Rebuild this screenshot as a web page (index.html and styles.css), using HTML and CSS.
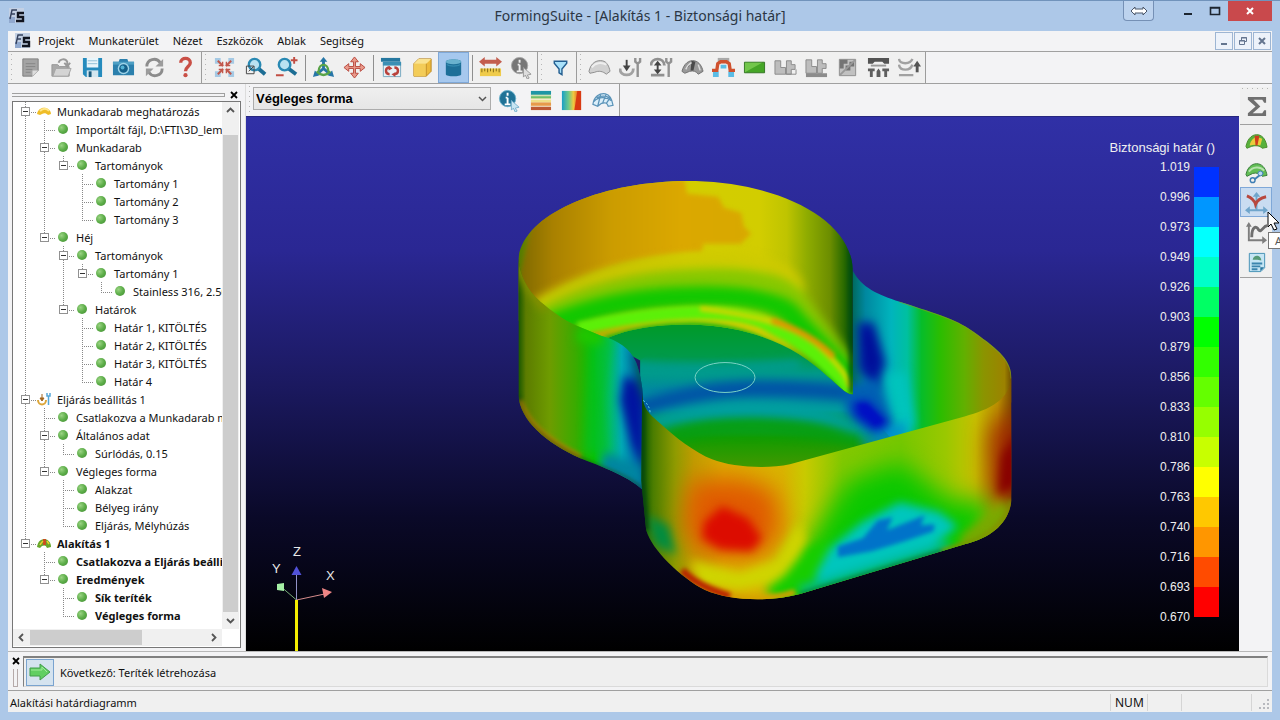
FILE: index.html
```html
<!DOCTYPE html>
<html lang="hu">

<head>
    <meta charset="utf-8">
    <title>FormingSuite - [Alakítás 1 - Biztonsági határ]</title>
    <link rel="stylesheet" href="styles.css">
</head>

<body>
    <div class="window">
        <header class="titlebar">
            <svg class="logo" viewBox="0 0 18 16"><rect x="1" width="15" height="15" fill="#c3d0e4"/><path d="M1 9h6v6H1z" fill="#91a9cf"/><path d="M2 11L4 2h5M3 6h4" fill="none" stroke="#34405c" stroke-width="1.4"/><path d="M16 5h-6v4h5v4H8" fill="none" stroke="#10141f" stroke-width="2.4"/></svg>
            <h1>FormingSuite - [Alakítás 1 - Biztonsági határ]</h1>
            <div class="caption-buttons">
                <button class="cap-switch" aria-label="Váltás"><svg width="18" height="10" viewBox="0 0 18 10"><path d="M1 5l4-4v2h8V1l4 4-4 4V7H5v2z" fill="#fff" stroke="#4b5668"/></svg></button>
                <button class="cap" aria-label="Kis méret"><svg width="12" height="12" viewBox="0 0 12 12"><path d="M2 8h8v2H2z" fill="#1c2530"/></svg></button>
                <button class="cap" aria-label="Teljes méret"><svg width="12" height="12" viewBox="0 0 12 12"><path d="M1.500 2.500h9v7h-9zM1 3h10" fill="none" stroke="#1c2530" stroke-width="1.600"/></svg></button>
                <button class="cap cap-close" aria-label="Bezárás"><svg width="12" height="12" viewBox="0 0 12 12"><path d="M3 3l6 6M9 3l-6 6" stroke="#fff" stroke-width="2"/></svg></button>
            </div>
        </header>

        <div class="client">
            <nav class="menubar">
                <svg class="logo" viewBox="0 0 18 16"><rect x="1" width="15" height="15" fill="#c3d0e4"/><path d="M1 9h6v6H1z" fill="#91a9cf"/><path d="M2 11L4 2h5M3 6h4" fill="none" stroke="#34405c" stroke-width="1.4"/><path d="M16 5h-6v4h5v4H8" fill="none" stroke="#10141f" stroke-width="2.4"/></svg>
                <a href="#">Projekt</a>
                <a href="#">Munkaterület</a>
                <a href="#">Nézet</a>
                <a href="#">Eszközök</a>
                <a href="#">Ablak</a>
                <a href="#">Segitség</a>
                <div class="mdi-buttons">
                    <button aria-label="Ablak kis méret"><svg width="10" height="10" viewBox="0 0 10 10"><path d="M2 7h6v2H2z" fill="#64758f"/></svg></button>
                    <button aria-label="Ablak visszaállítás"><svg width="10" height="10" viewBox="0 0 10 10"><path d="M3.500 4V1.500h5v4H7M1.500 4.500h5v4h-5zM3 2h6M1 5h6" fill="none" stroke="#64758f"/></svg></button>
                    <button aria-label="Ablak bezárás"><svg width="10" height="10" viewBox="0 0 10 10"><path d="M2 2l6 6M8 2L2 8" stroke="#64758f" stroke-width="2"/></svg></button>
                </div>
            </nav>

            <div class="toolbars">
                <div class="toolbar">
                    <button aria-label="Új"><svg viewBox="0 0 24 24"><path d="M4 3h16v12l-6 6H4z" fill="#a4a4a4" stroke="#7d7d7d"/><path d="M7 8h10M7 11h10M7 14h7M7 17h5" stroke="#868686"/><path d="M20 15l-6 6v-6z" fill="#ddd"/></svg></button>
                    <button aria-label="Megnyitás"><svg viewBox="0 0 24 24"><path d="M2 21V9h6l2 2h10v10z" fill="#a9a9a9" stroke="#999"/><path d="M3 21l3-8h16l-3 8z" fill="#d4d4d4" stroke="#a5a5a5"/><path d="M9 7c1-4 7-5 9-1v4M15 7l3 4 3-4" fill="none" stroke="#999" stroke-width="2"/></svg></button>
                    <button aria-label="Mentés"><svg viewBox="0 0 24 24"><path d="M2 2h20v20H5l-3-3z" fill="#258bbd"/><path d="M6 2h12v10H6z" fill="#e8f5fb"/><path d="M7 5h10M7 8h10" stroke="#8fbfd6"/><path d="M6 15h12v7H6z" fill="#d3e6ef"/><path d="M8 16h3v6H8z" fill="#19597c"/></svg></button>
                    <button aria-label="Pillanatkép"><svg viewBox="0 0 24 24"><path d="M1 6h6l1-3h8l1 3h6v14H1z" fill="#2c80ad"/><path d="M1 6h22v3H1z" fill="#4d9fc4"/><circle cx="12" cy="13" r="6" fill="#9ed3e8"/><circle cx="12" cy="13" r="4.500" fill="#14608a"/><circle cx="11" cy="12" r="2" fill="#53b2d4"/></svg></button>
                    <button aria-label="Frissítés"><svg viewBox="0 0 24 24"><path d="M4 11c0-8 10-10 14-4M20 13c0 8-10 10-14 4" fill="none" stroke="#8c8c8c" stroke-width="3"/><path d="M21 3v8h-8zM3 21v-8h8z" fill="#9c9c9c"/></svg></button>
                    <button aria-label="Súgó"><svg viewBox="0 0 24 24"><path d="M7 7c0-6 10-6 10 0 0 4-5 4-5 9" fill="none" stroke="#c94f46" stroke-width="3.500"/><circle cx="12" cy="20" r="2.200" fill="#c94f46"/></svg></button>
                </div>
                <div class="toolbar">
                    <button aria-label="Teljes nézet"><svg viewBox="0 0 24 24"><path d="M2 2h6v6H2zM16 2h6v6h-6zM2 16h6v6H2zM16 16h6v6h-6z" fill="#a5c9e4"/><path d="M5 5l14 14M19 5L5 19" stroke="#c2564a" stroke-width="2"/><path d="M10 10h4v4h-4z" fill="#f0f0f0"/><path d="M6 10h4V6M14 6v4h4M6 14h4v4M14 18v-4h4" fill="none" stroke="#c2564a" stroke-width="1.500"/></svg></button>
                    <button aria-label="Nagyítás terület"><svg viewBox="0 0 24 24"><path d="M15 13l7 6" stroke="#1c6d94" stroke-width="4"/><circle cx="11" cy="9" r="6" fill="#b9e2f1" stroke="#2989b3" stroke-width="2.500"/><path d="M2.500 10.500h8v8h-8z" fill="none" stroke="#444"/><path d="M5 16l5-5" stroke="#333"/></svg></button>
                    <button aria-label="Nagyítás"><svg viewBox="0 0 24 24"><path d="M14 13l8 6" stroke="#1c6d94" stroke-width="4"/><circle cx="10" cy="9" r="6" fill="#b9e2f1" stroke="#2989b3" stroke-width="2.500"/><path d="M20 1v7M16.500 4.500h7M1 20h8" stroke="#c14d43" stroke-width="2"/></svg></button>
                    <span class="sep"></span>
                    <button aria-label="Forgatás"><svg viewBox="0 0 24 24"><path d="M12 3v10M12 13l-8 7M12 13l8 7" stroke="#2676a7" stroke-width="3"/><path d="M12 1l4 5H8zM1 22l2-7 5 5zM23 22l-2-7-5 5z" fill="#2676a7"/><path d="M7 16c0-9 10-9 10 0M5 16c4 5 10 5 14 0" fill="none" stroke="#58a348" stroke-width="2.500"/></svg></button>
                    <button aria-label="Mozgatás"><svg viewBox="0 0 24 24"><path d="M12 1l4 5h-3v5h5V8l5 4-5 4v-3h-5v5h3l-4 5-4-5h3v-5H6v3l-5-4 5-4v3h5V6H8z" fill="#e99a8b" stroke="#b8493f"/></svg></button>
                    <span class="sep"></span>
                    <button aria-label="Ablakok"><svg viewBox="0 0 24 24"><path d="M1 2h20v4H1z" fill="#25779f"/><path d="M3.500 6.500h18v15h-18z" fill="#e8f1f6" stroke="#77a9c0"/><path d="M3 6h19v4H3z" fill="#3b8fb4"/><path d="M10 12c-5 0-5 7 0 7M15 12c5 0 5 7 0 7" fill="none" stroke="#b9413b" stroke-width="2.500"/><path d="M9 10l4 3-4 2zM16 17l-4 2 4 3z" fill="#b9413b"/></svg></button>
                    <button aria-label="Téglatest"><svg viewBox="0 0 24 24"><path d="M3 8l5-5h13v13l-5 5H3z" fill="#edba3c" stroke="#b98722"/><path d="M3 8h13v13H3z" fill="#f3cc58"/><path d="M3 8l5-5h13l-5 5z" fill="#fae391"/><path d="M16 8v13" stroke="#c6932c"/></svg></button>
                    <button class="pressed" aria-label="Árnyalt"><svg viewBox="0 0 24 24"><path d="M4 6c0-3 16-3 16 0v13c0 3-16 3-16 0z" fill="#1d6f98"/><ellipse cx="12" cy="6" rx="8" ry="2.500" fill="#69b2cf"/><path d="M5 9c3 2 11 2 14 0" fill="none" stroke="#3c94b9"/></svg></button>
                    <span class="sep"></span>
                    <button aria-label="Mérés"><svg viewBox="0 0 24 24"><path d="M0 6l6-5v3h12V1l6 5-6 5V8H6v3z" fill="#c35d4e"/><path d="M1 13h22v8H1z" fill="#efcb4b"/><path d="M3 13v4M6 13v3M9 13v4M12 13v3M15 13v4M18 13v3M21 13v4" stroke="#806716"/></svg></button>
                    <button aria-label="Információ"><svg viewBox="0 0 24 24"><circle cx="10" cy="10" r="8.500" fill="#767676" stroke="#a7a7a7"/><path d="M10 4v3M10 9v7M8 9h2M7 16h6" stroke="#eee" stroke-width="2"/><path d="M14 12l8 7-4 1 2 3-2 1-2-4-2 2z" fill="#ddd" stroke="#999"/></svg></button>
                </div>
                <div class="toolbar">
                    <button aria-label="Szűrő"><svg viewBox="0 0 24 24"><path d="M5.500 5.500h13v2l-5 6v6l-3-2v-4l-5-6z" fill="#a9e1fa" stroke="#245f91" stroke-width="1.500"/></svg></button>
                </div>
                <div class="toolbar">
                    <button aria-label="Munkadarab"><svg viewBox="0 0 24 24"><path d="M1 16C3 7 9 4 15 5c5 1 7 6 8 11l-4 3c-3-3-8-4-12-2l-5 1z" fill="#d1d1d1" stroke="#8c8c8c"/><path d="M4 12c3-5 10-6 15-3" fill="none" stroke="#eee" stroke-width="2"/></svg></button>
                    <button aria-label="Eljárás"><svg viewBox="0 0 24 24"><path d="M1 13c0 9 14 9 14 0" fill="none" stroke="#a2a2a2" stroke-width="3"/><path d="M8 4v9" stroke="#444" stroke-width="2"/><path d="M4 10h8l-4 6z" fill="#444"/><path d="M17 2v4l2.500 2L22 6V2M19.500 8v14" fill="none" stroke="#929292" stroke-width="2.500"/></svg></button>
                    <button aria-label="Prés"><svg viewBox="0 0 24 24"><path d="M1 10c0-9 14-9 14 0M1 20h14" fill="none" stroke="#909090" stroke-width="3"/><path d="M8 8v8" stroke="#444" stroke-width="2"/><path d="M4 10l4-5 4 5zM4 14l4 5 4-5z" fill="#444"/><path d="M17 2v4l2.500 2L22 6V2M19.500 8v14" fill="none" stroke="#929292" stroke-width="2.500"/></svg></button>
                    <button aria-label="Alakítás"><svg viewBox="0 0 24 24"><path d="M1 16C3 8 8 4 14 5c5 1 8 6 9 11l-5 3c-2-3-5-4-9-3l-5 2z" fill="#999" stroke="#707070"/><path d="M11 5l4 1-2 9h-3z" fill="#4a4a4a"/><path d="M5 14c2-4 4-6 6-7M18 9l2 6" stroke="#ddd" stroke-width="1.500"/></svg></button>
                    <button aria-label="Szerszám"><svg viewBox="0 0 24 24"><path d="M6 2h12v5H6z" fill="#a9a9a9"/><path d="M1 16h6v6H1zM9 9h6v4H9zM17 16h6v6h-6z" fill="#5bbce5"/><path d="M0 15h5l1-7 3-2h6l3 2 1 7h5" fill="none" stroke="#d0512e" stroke-width="3.500"/></svg></button>
                    <button aria-label="Teríték"><svg viewBox="0 0 24 24"><path d="M1.500 6.500h21v11h-21z" fill="#45a527" stroke="#347525"/><path d="M2 17L20 7H2z" fill="#72c64b"/></svg></button>
                    <button aria-label="Beágyazás"><svg viewBox="0 0 24 24"><path d="M1 5h6v7h5v7H1zM13 5h5v4h4v5h-4v5h-5z" fill="#bdbdbd" stroke="#8b8b8b"/><path d="M12 19h11v-5" fill="none" stroke="#8b8b8b"/></svg></button>
                    <button aria-label="Beágyazás szalag"><svg viewBox="0 0 24 24"><path d="M1 4h6v7h5v7H1zM13 4h5v4h4v5h-4v5h-5z" fill="#bdbdbd" stroke="#8b8b8b"/><path d="M1 18h22v4H1z" fill="#8c8c8c"/></svg></button>
                    <button aria-label="Háló"><svg viewBox="0 0 24 24"><path d="M3.500 3.500h17v17h-17z" fill="#c1c1c1" stroke="#8d8d8d"/><path d="M4 4h8v4H8v5H4zM14 6h5v5h-4v4h-5v-5h4z" fill="#747474"/><path d="M4 20L20 4" stroke="#999" stroke-width="2"/></svg></button>
                    <button aria-label="Szerszámkészlet"><svg viewBox="0 0 24 24"><path d="M1 2h22v6h-5l-2-2H8L6 8H1z" fill="#535353"/><path d="M4 10h16" stroke="#999" stroke-width="2"/><path d="M1 13h7v3H6v6H3v-6H1zM10 22v-6l2-3 2 3v6zM16 13h7v3h-2v6h-3v-6h-2z" fill="#5e5e5e"/></svg></button>
                    <button aria-label="Visszarugózás"><svg viewBox="0 0 24 24"><path d="M1 3c1 6 12 6 14 0M1 9c1 7 12 7 14 0M1 20h15" fill="none" stroke="#a1a1a1" stroke-width="2.500"/><path d="M20 8v9" stroke="#555" stroke-width="3"/><path d="M16 11l4-6 4 6z" fill="#555"/></svg></button>
                </div>
            </div>

            <div class="workspace">
                <aside class="dock">
                    <div class="dock-head">
                        <span class="dock-grip"></span>
                        <button class="dock-close" aria-label="Panel bezárása"><svg width="8" height="8" viewBox="0 0 8 8"><path d="M1 1l6 6M7 1L1 7" stroke="#000" stroke-width="1.800"/></svg></button>
                    </div>
                    <div class="tree-box">
                        <div class="tree-view">
                            <ul class="tree">
                                <li>
                                    <div class="row"><button class="toggle" aria-label="Összecsukás"></button><svg class="node-icon" viewBox="0 0 14 14"><path d="M0 10c1-5 5-7 9-6 3 1 5 3 5 6l-3 1c-2-2-4-2-6-1l-2 1z" fill="#efbd28"/><path d="M3 7c3-3 7-3 9 0" stroke="#ffe68a" stroke-width="2" fill="none"/></svg><span>Munkadarab meghatározás</span></div>
                                    <ul>
                                        <li><div class="row"><i class="leaf"></i><i class="dot"></i><span>Importált fájl, D:\FTI\3D_lem</span></div></li>
                                        <li>
                                            <div class="row"><button class="toggle" aria-label="Összecsukás"></button><i class="dot"></i><span>Munkadarab</span></div>
                                            <ul>
                                                <li>
                                                    <div class="row"><button class="toggle" aria-label="Összecsukás"></button><i class="dot"></i><span>Tartományok</span></div>
                                                    <ul>
                                                        <li><div class="row"><i class="leaf"></i><i class="dot"></i><span>Tartomány 1</span></div></li>
                                                        <li><div class="row"><i class="leaf"></i><i class="dot"></i><span>Tartomány 2</span></div></li>
                                                        <li><div class="row"><i class="leaf"></i><i class="dot"></i><span>Tartomány 3</span></div></li>
                                                    </ul>
                                                </li>
                                            </ul>
                                        </li>
                                        <li>
                                            <div class="row"><button class="toggle" aria-label="Összecsukás"></button><i class="dot"></i><span>Héj</span></div>
                                            <ul>
                                                <li>
                                                    <div class="row"><button class="toggle" aria-label="Összecsukás"></button><i class="dot"></i><span>Tartományok</span></div>
                                                    <ul>
                                                        <li>
                                                            <div class="row"><button class="toggle" aria-label="Összecsukás"></button><i class="dot"></i><span>Tartomány 1</span></div>
                                                            <ul>
                                                                <li><div class="row"><i class="leaf"></i><i class="dot"></i><span>Stainless 316, 2.50</span></div></li>
                                                            </ul>
                                                        </li>
                                                    </ul>
                                                </li>
                                                <li>
                                                    <div class="row"><button class="toggle" aria-label="Összecsukás"></button><i class="dot"></i><span>Határok</span></div>
                                                    <ul>
                                                        <li><div class="row"><i class="leaf"></i><i class="dot"></i><span>Határ 1, KITÖLTÉS</span></div></li>
                                                        <li><div class="row"><i class="leaf"></i><i class="dot"></i><span>Határ 2, KITÖLTÉS</span></div></li>
                                                        <li><div class="row"><i class="leaf"></i><i class="dot"></i><span>Határ 3, KITÖLTÉS</span></div></li>
                                                        <li><div class="row"><i class="leaf"></i><i class="dot"></i><span>Határ 4</span></div></li>
                                                    </ul>
                                                </li>
                                            </ul>
                                        </li>
                                    </ul>
                                </li>
                                <li>
                                    <div class="row"><button class="toggle" aria-label="Összecsukás"></button><svg class="node-icon" viewBox="0 0 14 14"><path d="M1 8c0 6 8 6 8 0" fill="none" stroke="#dca63a" stroke-width="2"/><path d="M5 2v5M3 6l2 3 2-3z" stroke="#a2641d" fill="#a2641d"/><path d="M10 1v3h3V1M11.500 4v9" fill="none" stroke="#55a7d9" stroke-width="1.500"/></svg><span>Eljárás beállitás 1</span></div>
                                    <ul>
                                        <li><div class="row"><i class="leaf"></i><i class="dot"></i><span>Csatlakozva a Munkadarab m</span></div></li>
                                        <li>
                                            <div class="row"><button class="toggle" aria-label="Összecsukás"></button><i class="dot"></i><span>Általános adat</span></div>
                                            <ul>
                                                <li><div class="row"><i class="leaf"></i><i class="dot"></i><span>Súrlódás, 0.15</span></div></li>
                                            </ul>
                                        </li>
                                        <li>
                                            <div class="row"><button class="toggle" aria-label="Összecsukás"></button><i class="dot"></i><span>Végleges forma</span></div>
                                            <ul>
                                                <li><div class="row"><i class="leaf"></i><i class="dot"></i><span>Alakzat</span></div></li>
                                                <li><div class="row"><i class="leaf"></i><i class="dot"></i><span>Bélyeg irány</span></div></li>
                                                <li><div class="row"><i class="leaf"></i><i class="dot"></i><span>Eljárás, Mélyhúzás</span></div></li>
                                            </ul>
                                        </li>
                                    </ul>
                                </li>
                                <li class="active">
                                    <div class="row"><button class="toggle" aria-label="Összecsukás"></button><svg class="node-icon" viewBox="0 0 14 14"><path d="M0 11c1-6 4-8 8-8 4 1 6 4 6 8l-4 1c-1-3-3-3-5-2l-2 2z" fill="#67a82c"/><path d="M6 3h3v6H6z" fill="#c94f22"/><path d="M3 9c1-2 2-3 3-4M10 5l2 3" stroke="#e8cf2e" stroke-width="1.500"/></svg><span>Alakítás 1</span></div>
                                    <ul>
                                        <li><div class="row"><i class="leaf"></i><i class="dot"></i><span>Csatlakozva a Eljárás beállit</span></div></li>
                                        <li>
                                            <div class="row"><button class="toggle" aria-label="Összecsukás"></button><i class="dot"></i><span>Eredmények</span></div>
                                            <ul>
                                                <li><div class="row"><i class="leaf"></i><i class="dot"></i><span>Sík teríték</span></div></li>
                                                <li><div class="row"><i class="leaf"></i><i class="dot"></i><span>Végleges forma</span></div></li>
                                            </ul>
                                        </li>
                                    </ul>
                                </li>
                            </ul>
                        </div>
                        <div class="scroll-y">
                            <button aria-label="Fel"><svg width="9" height="9" viewBox="0 0 9 9"><path d="M1 6l3.500-3.500L8 6" fill="none" stroke="#555" stroke-width="1.800"/></svg></button>
                            <span class="track"><span class="thumb"></span></span>
                            <button aria-label="Le"><svg width="9" height="9" viewBox="0 0 9 9"><path d="M1 3l3.500 3.500L8 3" fill="none" stroke="#555" stroke-width="1.800"/></svg></button>
                        </div>
                        <div class="scroll-x">
                            <button aria-label="Balra"><svg width="9" height="9" viewBox="0 0 9 9"><path d="M6 1L2.500 4.500 6 8" fill="none" stroke="#555" stroke-width="1.800"/></svg></button>
                            <span class="track"><span class="thumb"></span></span>
                            <button aria-label="Jobbra"><svg width="9" height="9" viewBox="0 0 9 9"><path d="M3 1l3.500 3.500L3 8" fill="none" stroke="#555" stroke-width="1.800"/></svg></button>
                        </div>
                    </div>
                </aside>

                <main class="stage">
                    <div class="view-toolbar">
                        <div class="combo">
                            <select aria-label="Nézet">
                                <option>Végleges forma</option>
                            </select>
                            <svg width="9" height="9" viewBox="0 0 9 9"><path d="M1 3l3.500 3.500L8 3" fill="none" stroke="#555" stroke-width="1.500"/></svg>
                        </div>
                        <button aria-label="Pont információ"><svg viewBox="0 0 24 24"><circle cx="10" cy="10" r="8.500" fill="#1f7296" stroke="#6bb0ca"/><path d="M10 4v3M10 9v7M8 9h2M7 16h6" stroke="#fff" stroke-width="2"/><path d="M14 12l8 7-4 1 2 3-2 1-2-4-2 2z" fill="#c7e5f2" stroke="#78b1cc"/></svg></button>
                        <button aria-label="Sávok"><svg viewBox="0 0 24 24"><path d="M2 2h21v4H2z" fill="#1f95a5"/><path d="M2 6h21v4H2z" fill="#6fbf6a"/><path d="M2 10h21v4H2z" fill="#efe088"/><path d="M2 14h21v4H2z" fill="#e79b4b"/><path d="M2 18h21v4H2z" fill="#bd5a34"/><path d="M2 7h21M2 11h21M2 18h21" stroke="#f3ead0"/></svg></button>
                        <button aria-label="Kontúr"><svg viewBox="0 0 24 24"><defs><linearGradient id="contourIcon"><stop offset="0" stop-color="#189fc8"/><stop offset=".35" stop-color="#6fca8a"/><stop offset=".6" stop-color="#f0c840"/><stop offset="1" stop-color="#dd3512"/></linearGradient></defs><path d="M2 2h20v20H2z" fill="url(#contourIcon)"/><path d="M18 2h4v20h-7z" fill="#d93a12"/></svg></button>
                        <button aria-label="Hálós nézet"><svg viewBox="0 0 24 24"><path d="M2 16C3 8 9 4 15 5c5 1 7 6 8 12l-5 1c-1-4-4-4-7-3l-4 3zM3 13c5-5 13-5 18-1M6 9c4-2 10-2 13 0M10 6l-3 12M16 5l-4 10M20 9l-4 6" fill="#dceffa" stroke="#5b93b8" stroke-width="1.300"/></svg></button>
                    </div>

                    <div class="viewport">
                        <svg class="model" viewBox="246 116 993 535">
                            <defs>
                                <filter id="fine" filterUnits="userSpaceOnUse" x="480" y="150" width="570" height="490" color-interpolation-filters="sRGB"><feGaussianBlur stdDeviation="2"/></filter>
                                <filter id="soft" filterUnits="userSpaceOnUse" x="480" y="150" width="570" height="490" color-interpolation-filters="sRGB"><feGaussianBlur stdDeviation="5"/></filter>
                                <filter id="softer" filterUnits="userSpaceOnUse" x="480" y="150" width="570" height="490" color-interpolation-filters="sRGB"><feGaussianBlur stdDeviation="12"/></filter>
                                <linearGradient id="wallShade" gradientUnits="userSpaceOnUse" x1="518" x2="854" y1="0" y2="0">
                                    <stop offset="0" stop-color="#527a00"/><stop offset=".08" stop-color="#8d9800"/><stop offset=".25" stop-color="#b9b000"/><stop offset=".5" stop-color="#d4cd00"/><stop offset=".72" stop-color="#d2cd00"/><stop offset=".8" stop-color="#bfc400"/><stop offset=".86" stop-color="#8fac00"/><stop offset=".93" stop-color="#6b8d00"/><stop offset=".97" stop-color="#2b6b00"/><stop offset="1" stop-color="#004d10"/>
                                </linearGradient>
                                <linearGradient id="orangeShade" gradientUnits="userSpaceOnUse" x1="518" x2="750" y1="0" y2="0">
                                    <stop offset="0" stop-color="#7c6800"/><stop offset=".15" stop-color="#a98100"/><stop offset=".4" stop-color="#cb9c00"/><stop offset=".7" stop-color="#dba800"/><stop offset="1" stop-color="#d8a800"/>
                                </linearGradient>
                                <linearGradient id="pocketShade" gradientUnits="userSpaceOnUse" x1="853" x2="1013" y1="0" y2="0">
                                    <stop offset="0" stop-color="#006a60"/><stop offset=".08" stop-color="#0088a0"/><stop offset=".24" stop-color="#00b4bd"/><stop offset=".34" stop-color="#00c0a0"/><stop offset=".43" stop-color="#06bd2a"/><stop offset=".55" stop-color="#2cbd00"/><stop offset=".7" stop-color="#62b000"/><stop offset=".82" stop-color="#8b9400"/><stop offset=".95" stop-color="#9c8200"/><stop offset="1" stop-color="#6b4700"/>
                                </linearGradient>
                                <linearGradient id="leftShade" gradientUnits="userSpaceOnUse" x1="518" x2="644" y1="0" y2="0">
                                    <stop offset="0" stop-color="#185700"/><stop offset=".06" stop-color="#5c7c00"/><stop offset=".25" stop-color="#6e9c00"/><stop offset=".45" stop-color="#3bab00"/><stop offset=".6" stop-color="#07c200"/><stop offset=".72" stop-color="#02bd63"/><stop offset=".82" stop-color="#00aab4"/><stop offset=".93" stop-color="#006fae"/><stop offset="1" stop-color="#00507a"/>
                                </linearGradient>
                                <linearGradient id="frontShade" gradientUnits="userSpaceOnUse" x1="642" x2="1013" y1="0" y2="0">
                                    <stop offset="0" stop-color="#0e5a00"/><stop offset=".03" stop-color="#4b7d00"/><stop offset=".09" stop-color="#909b00"/><stop offset=".14" stop-color="#c09c00"/><stop offset=".22" stop-color="#dcab00"/><stop offset=".38" stop-color="#d9b400"/><stop offset=".44" stop-color="#c8ca00"/><stop offset=".54" stop-color="#83c800"/><stop offset=".7" stop-color="#76c700"/><stop offset=".82" stop-color="#9ac800"/><stop offset=".9" stop-color="#c7c200"/><stop offset=".96" stop-color="#bd9a00"/><stop offset="1" stop-color="#774b00"/>
                                </linearGradient>
                                <linearGradient id="floorShade" gradientUnits="userSpaceOnUse" x1="0" x2="0" y1="328" y2="468">
                                    <stop offset="0" stop-color="#009a2c"/><stop offset=".2" stop-color="#009a4a"/><stop offset=".32" stop-color="#009a88"/><stop offset=".44" stop-color="#008aa0"/><stop offset=".58" stop-color="#009c9e"/><stop offset=".68" stop-color="#06a03a"/><stop offset=".78" stop-color="#129c00"/><stop offset="1" stop-color="#439800"/>
                                </linearGradient>
                                <clipPath id="wallClip"><path d="M518 258C522 214 600 180 690 180C775 181 850 216 853 268V394C846 394 838 384 828 376C800 350 760 326 690 324C655 324 630 328 606 338L600 350L518 320Z"/></clipPath>
                                <clipPath id="pocketClip"><path d="M853 270C862 287 878 294 900 301C940 314 960 320 975 332C1000 350 1012 360 1012 378V402L893 440L853 393Z"/></clipPath>
                                <clipPath id="floorClip"><path d="M576 325C650 310 750 315 800 345L853 390L905 436L795 470H720L640 420V360Z"/></clipPath>
                                <clipPath id="insideClip"><path d="M853 270C862 287 878 294 900 301C940 314 960 320 975 332C1000 350 1012 360 1012 378V402L795 470H720L640 420V360L690 320L800 345L853 390Z"/></clipPath>
                                <clipPath id="leftClip"><path d="M518 258C520 275 526 289 540 301C552 311 562 318 576 325L600 335C618 340 630 348 636 362C641 376 643 390 643 402V490C625 474 600 466 580 458C545 442 520 420 518 395Z"/></clipPath>
                                <clipPath id="frontClip"><path d="M642 392C642 408 650 414 659 422C675 437 695 452 712 459C732 467 766 469 790 464L965 416C990 409 1010 400 1012 376V500C1010 520 995 537 965 544L800 594C770 602 730 601 705 590C680 577 652 550 646 530L641 480Z"/></clipPath>
                            </defs>

                            <!-- bottom of the part -->
                            <g clip-path="url(#floorClip)">
                                <path d="M560 310H920V480H560Z" fill="url(#floorShade)"/>
                            </g>

                            <!-- right pocket -->
                            <g clip-path="url(#pocketClip)">
                                <path d="M800 260H1020V470H800Z" fill="url(#pocketShade)"/>
                                <g filter="url(#soft)">
                                    <path d="M858 322L874 322 886 362 876 392 859 368Z" fill="#0018a0"/>
                                    <path d="M862 330L872 334 878 365 868 370Z" fill="#000c98"/>
                                </g>
                                <path d="M900 301C940 314 960 320 975 332C1000 350 1012 360 1012 378" fill="none" stroke="#7c9d20" stroke-width="2" opacity=".7"/>
                            </g>

                            <g clip-path="url(#insideClip)">
                                <g filter="url(#soft)">
                                    <path d="M630 366Q690 374 800 364" fill="none" stroke="#009b92" stroke-width="9"/>
                                    <path d="M638 408Q700 388 760 388T880 396" fill="none" stroke="#0054a6" stroke-width="16"/>
                                    <path d="M652 424Q710 404 770 408T870 436" fill="none" stroke="#009f9f" stroke-width="11"/>
                                    <path d="M675 436Q745 414 860 440" fill="none" stroke="#079e12" stroke-width="12"/>
                                    <path d="M845 386L878 378 894 425 880 442 846 412Z" fill="#0060b4"/>
                                    <path d="M888 375L905 370 915 424 900 436Z" fill="#00c4bd"/>
                                </g>
                                <path d="M853 402L868 400 888 422 880 432 856 416Z" fill="#0010c4" filter="url(#soft)"/>
                                <path d="M857 404L867 404 884 421 875 424Z" fill="#0010c4" filter="url(#fine)"/>
                                <path d="M860 440L906 420V440L870 448Z" fill="#008cd0" filter="url(#soft)" opacity=".8"/>
                            </g>

                            <!-- inside of the tall wall, bands follow the bend radius -->
                            <g clip-path="url(#wallClip)">
                                <path d="M510 170H860V400H510Z" fill="url(#wallShade)"/>
                                <path d="M532 222L570 197 630 182 684 178 687 193 718 196 724 207 741 212 744 226 751 233 741 243 703 243 702 251C640 254 590 266 536 302L516 290Z" fill="url(#orangeShade)" filter="url(#fine)"/>
                                <g fill="none" filter="url(#soft)">
                                    <path d="M535 304Q600 265 695 259T800 290" stroke="#cdca00" stroke-width="10"/>
                                    <path d="M540 316Q605 280 695 276T800 302L850 366" stroke="#85c800" stroke-width="16"/>
                                    <path d="M548 326Q610 298 695 296T795 320L856 384" stroke="#12c800" stroke-width="22"/>
                                </g>
                                <g fill="none" filter="url(#fine)">
                                    <path d="M578 328Q640 313 695 312T775 328Q825 352 853 398" stroke="#5cf008" stroke-width="13"/>
                                    <path d="M605 339Q650 324 695 325T775 346Q820 366 840 392" stroke="#15b810" stroke-width="6"/>
                                    <path d="M700 308Q790 318 820 346T850 387" stroke="#c4d800" stroke-width="6"/>
                                    <path d="M772 320Q810 332 834 356" stroke="#dc9a00" stroke-width="6"/>
                                </g>
                                <path d="M852 240V394" stroke="#004c10" stroke-width="6" opacity=".8" filter="url(#fine)"/>
                            </g>

                            <!-- left outer wall -->
                            <g clip-path="url(#leftClip)">
                                <path d="M510 250H650V500H510Z" fill="url(#leftShade)"/>
                                <g filter="url(#soft)">
                                    <path d="M624 375L644 385V465L632 445 620 400Z" fill="#0014a0"/>
                                    <path d="M590 337L615 335 600 400 608 455 585 452Z" fill="#04bf30" opacity=".6"/>
                                    <path d="M605 452L640 465 645 490 600 470Z" fill="#0085a0"/>
                                    <path d="M632 350L650 362V415L638 385Z" fill="#00605c"/>
                                    <path d="M580 326L604 334 600 345 575 340Z" fill="#20c800"/>
                                    <path d="M514 262L545 308" stroke="#8a9000" stroke-width="10"/>
                                </g>
                                <path d="M519 400C524 421 545 440 580 457" fill="none" stroke="#b98600" stroke-width="6" filter="url(#fine)"/>
                                <path d="M518 395C520 420 545 442 580 458S625 474 643 490" fill="none" stroke="#183d10" stroke-width="2" filter="url(#fine)"/>
                            </g>

                            <!-- front outer wall -->
                            <g clip-path="url(#frontClip)">
                                <path d="M636 370H1020V610H636Z" fill="url(#frontShade)"/>
                                <g filter="url(#softer)">
                                    <path d="M850 480L900 462 950 500 990 500 985 550 800 620H780L790 570Z" fill="#0ac800"/>
                                    <path d="M690 480L740 478 775 490 782 530 760 556 700 554 683 525Z" fill="#e05a00"/>
                                    <path d="M990 430L1020 400V500L992 500Z" fill="#a02000"/>
                                </g>
                                <g filter="url(#soft)">
                                    <path d="M690 560L740 572 775 560 800 520 806 540 790 580 740 590 700 585Z" fill="#cfd400"/>
                                    <path d="M785 575L806 548 830 540 820 595 780 600 765 590Z" fill="#17cd00"/>
                                    <path d="M646 515L668 525 676 555 655 545Z" fill="#008c40"/>
                                    <path d="M704 522L722 506 748 518 762 538 752 551 720 549 702 538Z" fill="#dc0c00"/>
                                    <path d="M1002 455L1018 430V485L998 496Z" fill="#880000"/>
                                    <path d="M816 574L830 548 862 522 900 502 940 512 958 526 935 545 870 568 816 588Z" fill="#00c6bd"/>
                                    <path d="M800 590L860 572 950 545" stroke="#00b895" stroke-width="8"/>
                                    <path d="M962 535L1005 500 1014 520 960 552Z" fill="#7aa800"/>
                                </g>
                                <path d="M838 546L863 538 878 520 893 517 887 530 925 515 921 525 935 524 934 531 905 541 872 551 838 557Z" fill="#0073c9" filter="url(#fine)"/>
                                <g fill="none" filter="url(#fine)">
                                    <path d="M684 572Q705 592 735 597T795 592" stroke="#d4a000" stroke-width="6"/>
                                    <path d="M682 570Q696 586 730 596" stroke="#b92200" stroke-width="7"/>
                                    <path d="M800 594L965 544" stroke="#007052" stroke-width="3"/>
                                    <path d="M942 551L965 544Q1004 532 1012 500" stroke="#819000" stroke-width="4"/>
                                    <path d="M642 395V480L646 530" stroke="#064410" stroke-width="5"/>
                                </g>
                            </g>
                            <path d="M643 400Q649 404 650 412" fill="none" stroke="#5fd6dd" stroke-dasharray="2 2"/>
                            <ellipse cx="725" cy="377" rx="30" ry="15" fill="none" stroke="#79d2c4"/>
                        </svg>

                        <svg class="axes" width="80" height="110" viewBox="266 541 80 110">
                            <path d="M296.500 600V574" stroke="#9292c8"/>
                            <path d="M296.500 600l-14-12" stroke="#79ad79"/>
                            <path d="M296.500 600l28-6" stroke="#d58b8b"/>
                            <path d="M296.500 651V600" stroke="#f4ed00" stroke-width="3"/>
                            <path d="M296.500 566l5 9h-10z" fill="#5151d8"/>
                            <path d="M277 584l7-1v8l-7-1z" fill="#a5efa5"/>
                            <path d="M322 588l10 4-8 6z" fill="#ee8585"/>
                            <text x="293" y="556">Z</text>
                            <text x="272" y="573">Y</text>
                            <text x="326" y="580">X</text>
                        </svg>

                        <div class="legend">
                            <h2>Biztonsági határ ()</h2>
                            <div class="scale">
                                <ol>
                                    <li>1.019</li>
                                    <li>0.996</li>
                                    <li>0.973</li>
                                    <li>0.949</li>
                                    <li>0.926</li>
                                    <li>0.903</li>
                                    <li>0.879</li>
                                    <li>0.856</li>
                                    <li>0.833</li>
                                    <li>0.810</li>
                                    <li>0.786</li>
                                    <li>0.763</li>
                                    <li>0.740</li>
                                    <li>0.716</li>
                                    <li>0.693</li>
                                    <li>0.670</li>
                                </ol>
                                <div class="ramp">
                                    <i style="background:#0032ff"></i>
                                    <i style="background:#0096ff"></i>
                                    <i style="background:#00ffff"></i>
                                    <i style="background:#00ffc8"></i>
                                    <i style="background:#00ff64"></i>
                                    <i style="background:#00ff00"></i>
                                    <i style="background:#32ff00"></i>
                                    <i style="background:#64ff00"></i>
                                    <i style="background:#96ff00"></i>
                                    <i style="background:#c8ff00"></i>
                                    <i style="background:#ffff00"></i>
                                    <i style="background:#ffc800"></i>
                                    <i style="background:#ff9600"></i>
                                    <i style="background:#ff4b00"></i>
                                    <i style="background:#ff0000"></i>
                                </div>
                            </div>
                        </div>
                    </div>
                </main>

                <aside class="side-toolbar">
                    <div class="side-buttons">
                        <button aria-label="Összegzés"><svg viewBox="0 0 24 24"><path d="M3 2h19v6h-2l-2-3H9l7 7-8 7h10l2-3h2v6H3v-3l8-7-8-7z" fill="#6f6f6f"/></svg></button>
                        <span class="hsep"></span>
                        <button aria-label="Alakítási zónák"><svg viewBox="0 0 24 24"><path d="M1 16C3 7 8 3 14 4c5 1 8 6 9 13l-5 1c-3-3-7-3-11-2l-5 2z" fill="#57b13c" stroke="#4a8c2c"/><path d="M5 14c1-4 4-7 7-8l6 2-2 7c-3-1-7-1-11 0z" fill="#eacb3c"/><path d="M10 5h5l-2 10h-2z" fill="#cf3d1d"/></svg></button>
                        <button aria-label="Metszet"><svg viewBox="0 0 24 24"><path d="M1 14C3 5 9 2 14 3c5 1 8 6 9 12l-5 1c-2-3-6-4-10-3l-6 3z" fill="#62be55" stroke="#367a38"/><path d="M4 11c4-5 12-6 16-1" fill="none" stroke="#b6e2ad" stroke-width="2"/><path d="M10 19l9-7" stroke="#3d7eb4" stroke-width="2"/><circle cx="8" cy="20" r="2.500" fill="none" stroke="#3d7eb4" stroke-width="1.500"/><circle cx="16" cy="13" r="2.500" fill="#b6d8ee" stroke="#3d7eb4"/></svg></button>
                        <div class="hinted">
                            <button class="pressed" aria-label="Alakítási határdiagramm"><svg viewBox="0 0 24 24"><path d="M12 3v17M2 20h20" stroke="#6fa5cb" stroke-width="2"/><path d="M8 6l4-5 4 5zM5 16l-5 4 5 4zM19 16l5 4-5 4z" fill="#6fa5cb"/><path d="M2 5c5 2 8 5 9 9 2-5 6-7 11-8" fill="none" stroke="#b8483e" stroke-width="3"/></svg></button>
                            <span class="hint">A</span>
                            <svg class="pointer" width="14" height="20" viewBox="0 0 14 20"><path d="M1 1v15l3-3 3 6 3-1-3-6h5z" fill="#fff" stroke="#000"/></svg>
                        </div>
                        <button aria-label="Görbe"><svg viewBox="0 0 24 24"><path d="M4 3v17h17" fill="none" stroke="#7d7d7d" stroke-width="2"/><path d="M1 6l3-5 3 5zM18 16l5 4-5 4z" fill="#7d7d7d"/><path d="M7 17c0-12 5-12 7-8 3 4 5-4 9-4" fill="none" stroke="#6f6f6f" stroke-width="3"/></svg></button>
                        <button aria-label="Jelentés"><svg viewBox="0 0 24 24"><path d="M4.500 2.500h16v15l-4 4h-12z" fill="#c5e5f4" stroke="#4390b5"/><path d="M8 9c1-6 9-5 9 1l-4-1z" fill="#569a76"/><path d="M7 13h11M7 16h9M7 19h6" stroke="#3b85ad" stroke-width="2"/><path d="M20 17l-4 4v-4z" fill="#27749d"/></svg></button>
                    </div>
                </aside>
            </div>

            <section class="task-dock">
                <div class="task-side">
                    <button class="dock-close" aria-label="Panel bezárása"><svg width="8" height="8" viewBox="0 0 8 8"><path d="M1 1l6 6M7 1L1 7" stroke="#000" stroke-width="1.800"/></svg></button>
                    <span class="vgrip"></span>
                </div>
                <div class="task-box">
                    <button class="next" aria-label="Következő"><svg width="24" height="20" viewBox="0 0 24 20"><path d="M2 6h10V2l10 8-10 8v-4H2z" fill="#61cf62" stroke="#439d4b"/><path d="M3 8h11V5l5 5" fill="none" stroke="#a1eb9a"/></svg></button>
                    <span>Következő: Teríték létrehozása</span>
                </div>
            </section>

            <footer class="statusbar">
                <span class="status-text">Alakítási határdiagramm</span>
                <span class="cell num">NUM</span>
                <span class="cell"></span>
                <span class="cell wide"></span>
                <svg class="sizegrip" width="20" height="16" viewBox="0 0 20 16"><path d="M15 4h2v2h-2zM11 8h2v2h-2zM15 8h2v2h-2zM7 12h2v2H7zM11 12h2v2h-2zM15 12h2v2h-2z" fill="#b7b9be"/></svg>
            </footer>
        </div>
    </div>
</body>

</html>
```
FILE: styles.css
```css
* {
    box-sizing: border-box;
}

html,
body {
    height: 100%;
    margin: 0;
}

body {
    font-family: "Noto Sans", "Open Sans", sans-serif;
    font-size: 11px;
    color: #111;
    overflow: hidden;
}

button {
    display: grid;
    place-items: center;
    padding: 0;
    border: 0;
    background: none;
    font: inherit;
}

ul,
ol {
    list-style: none;
    margin: 0;
    padding: 0;
}

.window {
    height: 100%;
    display: flex;
    flex-direction: column;
    padding: 0 8px 8px;
    background: #adc8e8;
    border: 1px solid #7193bb;
    border-width: 1px 0 0;
    overflow: hidden;
}

/* title bar */
.titlebar {
    display: grid;
    grid-template-columns: 1fr auto 1fr;
    height: 30px;
    flex: none;
}

.logo {
    width: 18px;
    height: 16px;
    align-self: center;
}

.titlebar h1 {
    margin: 0;
    font-size: 14px;
    font-weight: 400;
    line-height: 30px;
    color: #2b3643;
}

.caption-buttons {
    display: flex;
    justify-content: flex-end;
}

.cap-switch {
    width: 31px;
    height: 20px;
    margin-right: 20px;
    border: 1px solid #7590b5;
    border-top: 0;
    border-radius: 0 0 4px 4px;
    background: #bdd3ee;
}

.cap {
    width: 27px;
    height: 20px;
}

.cap-close {
    width: 44px;
    background: #c9494c;
}

.client {
    flex: 1;
    min-height: 0;
    display: flex;
    flex-direction: column;
    background: #f3f3f5;
}

/* menu */
.menubar {
    display: flex;
    align-items: center;
    height: 21px;
    flex: none;
    gap: 14px;
    padding: 0 1px 1px 6px;
    border-bottom: 1px solid #a0a0a0;
}

.menubar .logo {
    margin-right: -8px;
}

.menubar a {
    color: #111;
    text-decoration: none;
}

.mdi-buttons {
    display: flex;
    gap: 1px;
    margin-left: auto;
}

.mdi-buttons button {
    width: 18px;
    height: 18px;
    border: 1px solid #9db5d3;
    background: #edf2fa;
}

/* toolbars */
.toolbars {
    display: flex;
    height: 32px;
    flex: none;
    border-bottom: 1px solid #a0a0a0;
}

.toolbar {
    display: flex;
    align-items: center;
    padding-left: 7px;
    border-right: 1px solid #9c9c9c;
    background: radial-gradient(circle, #b5b5b5 1px, transparent 1px) 2px 0 / 3px 5px repeat-y, #f0f0f0;
}

.toolbar button,
.view-toolbar button {
    width: 31px;
    height: 31px;
}

.toolbar svg,
.view-toolbar button svg,
.side-toolbar button svg {
    width: 23px;
    height: 23px;
}

.pressed {
    background: #a6c8ee;
    outline: 1px solid #7fa8d8;
    outline-offset: -1px;
}

.sep {
    width: 6px;
    height: 26px;
    background: linear-gradient(#8f8f8f, #8f8f8f) center / 1px 100% no-repeat;
}

.workspace {
    flex: 1;
    min-height: 0;
    display: flex;
}

/* tree panel */
.dock {
    width: 238px;
    flex: none;
    display: flex;
    flex-direction: column;
    padding: 4px 4px 3px;
    border-right: 1px solid #dcdcdc;
}

.dock-head {
    display: flex;
    align-items: center;
    height: 13px;
    gap: 4px;
    padding-right: 2px;
}

.dock-grip {
    flex: 1;
    height: 4px;
    border: 1px solid #a0a0a0;
    border-left: 0;
}

.dock-close {
    width: 10px;
    height: 10px;
}

.tree-box {
    flex: 1;
    min-height: 0;
    display: grid;
    grid-template-columns: minmax(0, 1fr) 17px;
    grid-template-rows: minmax(0, 1fr) 17px;
    border: 1px solid #777;
    padding: 0 1px 1px 0;
    background: #fff;
}

.tree-view {
    overflow: hidden;
}

.tree {
    white-space: nowrap;
}

.tree li {
    background: repeating-linear-gradient(#888 0 1px, #fff 1px 2px) 12px 0 / 1px 100% no-repeat;
}

.tree li:last-child {
    background-size: 1px 10px;
}

.tree ul {
    padding-left: 19px;
}

.row {
    display: flex;
    align-items: center;
    height: 18px;
    padding-left: 8px;
    background: repeating-linear-gradient(90deg, #888 0 1px, transparent 1px 2px) 12px 10px / 12px 1px no-repeat;
}

.row span {
    padding-left: 6px;
}

.toggle,
.leaf {
    width: 9px;
    height: 9px;
    flex: none;
    margin: 1px 7px 0 0;
}

.toggle {
    border: 1px solid #919191;
    background: linear-gradient(#333, #333) center / 5px 1px no-repeat, #fff;
}

.node-icon {
    width: 14px;
    height: 14px;
    flex: none;
}

.dot {
    width: 10px;
    height: 10px;
    flex: none;
    margin: 0 2px;
    border-radius: 50%;
    background: radial-gradient(circle at 35% 35%, #9ad383, #5cad48 50%, #438c35);
}

.active {
    font-weight: 700;
}

.scroll-y,
.scroll-x {
    display: flex;
    background: #f0f0f0;
}

.scroll-y {
    flex-direction: column;
}

.scroll-y button,
.scroll-x button {
    width: 17px;
    height: 17px;
}

.track {
    flex: 1;
    display: flex;
}

.thumb {
    background: #cdcdcd;
}

.scroll-y .track {
    flex-direction: column;
    padding: 16px 1px 0;
}

.scroll-y .thumb {
    flex: 1;
}

.scroll-x .thumb {
    width: 64%;
    margin: 1px 0;
}

/* 3D view */
.stage {
    flex: 1;
    min-width: 0;
    display: flex;
    flex-direction: column;
}

.view-toolbar {
    display: flex;
    align-items: center;
    align-self: flex-start;
    height: 32px;
    padding: 0 1px 0 7px;
    border-right: 1px solid #9c9c9c;
    background: radial-gradient(circle, #b5b5b5 1px, transparent 1px) 2px 0 / 3px 5px repeat-y, #f3f3f5;
}

.combo {
    display: grid;
    grid-template-columns: 238px;
    align-items: center;
    margin: 0 3px 4px 0;
}

.combo select,
.combo svg {
    grid-area: 1 / 1;
}

.combo select {
    appearance: none;
    width: 100%;
    height: 23px;
    padding: 0 2px;
    border: 1px solid #acacac;
    border-radius: 0;
    background: linear-gradient(#efefef, #e6e6e6);
    font: bold 13px "Liberation Sans", sans-serif;
    color: #000;
}

.combo svg {
    justify-self: end;
    margin-right: 4px;
    pointer-events: none;
}

.viewport {
    flex: 1;
    min-height: 0;
    position: relative;
    border-top: 1px solid #26267e;
    background: linear-gradient(#3030a6, #2a2793 25%, #1b1960 50%, #0a0928 75%, #000);
}

.model {
    display: block;
    width: 100%;
    height: 100%;
}

.axes {
    position: absolute;
    left: 20px;
    bottom: 0;
    font: 13px "Liberation Sans", sans-serif;
    fill: #e8e8e8;
}

.legend {
    position: absolute;
    top: 23px;
    right: 20px;
    color: #f0f0f0;
    font: 12px "Liberation Sans", sans-serif;
}

.legend h2 {
    margin: 0 4px 3px 0;
    font-size: 13px;
    font-weight: 400;
    line-height: 16px;
}

.scale {
    display: flex;
    justify-content: flex-end;
    gap: 4px;
}

.scale li {
    height: 30px;
    line-height: 16px;
}

.scale li:last-child {
    height: 16px;
}

.ramp {
    display: flex;
    flex-direction: column;
    width: 25px;
    padding: 8px 0;
}

.ramp i {
    flex: 1;
}

/* right toolbar */
.side-toolbar {
    width: 33px;
    flex: none;
    padding: 3px 0 0 1px;
}

.side-buttons {
    padding-top: 4px;
    border-bottom: 1px solid #a0a0a0;
    background: radial-gradient(circle, #b5b5b5 1px, transparent 1px) 0 0 / 5px 3px repeat-x, #f0f0f0;
}

.side-buttons button {
    width: 32px;
    height: 30px;
}

.side-buttons .pressed {
    background: #c9dcf1;
}

.hsep {
    display: block;
    height: 6px;
    background: linear-gradient(#a0a0a0, #a0a0a0) center / 100% 1px no-repeat;
}

.hinted {
    position: relative;
}

.hint {
    position: absolute;
    left: 28px;
    top: 45px;
    padding: 0 6px;
    border: 1px solid #767676;
    background: #fff;
    color: #575757;
    line-height: 15px;
}

.pointer {
    position: absolute;
    left: 27px;
    top: 24px;
}

/* next step bar */
.task-dock {
    display: flex;
    height: 40px;
    flex: none;
    padding: 4px 4px 3px 0;
    border-top: 1px solid #b8b8b8;
    border-bottom: 1px solid #a0a0a0;
}

.task-side {
    width: 15px;
    flex: none;
    display: flex;
    flex-direction: column;
    align-items: center;
    gap: 3px;
}

.vgrip {
    flex: 1;
    width: 5px;
    border: 1px solid #b5aaaa;
    border-top: 0;
}

.task-box {
    flex: 1;
    display: flex;
    align-items: center;
    gap: 6px;
    padding-left: 2px;
    border: 1px solid #dadada;
    border-top: 2px solid #808080;
    border-left-color: #808080;
    background: #efefef;
}

.next {
    width: 28px;
    height: 27px;
    border: 1px solid #7aa3cf;
    background: #d5e3ef;
}

/* status bar */
.statusbar {
    display: flex;
    align-items: center;
    height: 21px;
    flex: none;
    padding-top: 2px;
    background: #f0f0f0;
}

.status-text {
    flex: 1;
    padding-left: 2px;
}

.cell {
    width: 34px;
    height: 17px;
    border-left: 1px solid #d5d5d5;
    line-height: 17px;
}

.num {
    width: 37px;
    padding-left: 4px;
    font-size: 12px;
}

.wide {
    width: 71px;
    border-right: 1px solid #d5d5d5;
}
```
